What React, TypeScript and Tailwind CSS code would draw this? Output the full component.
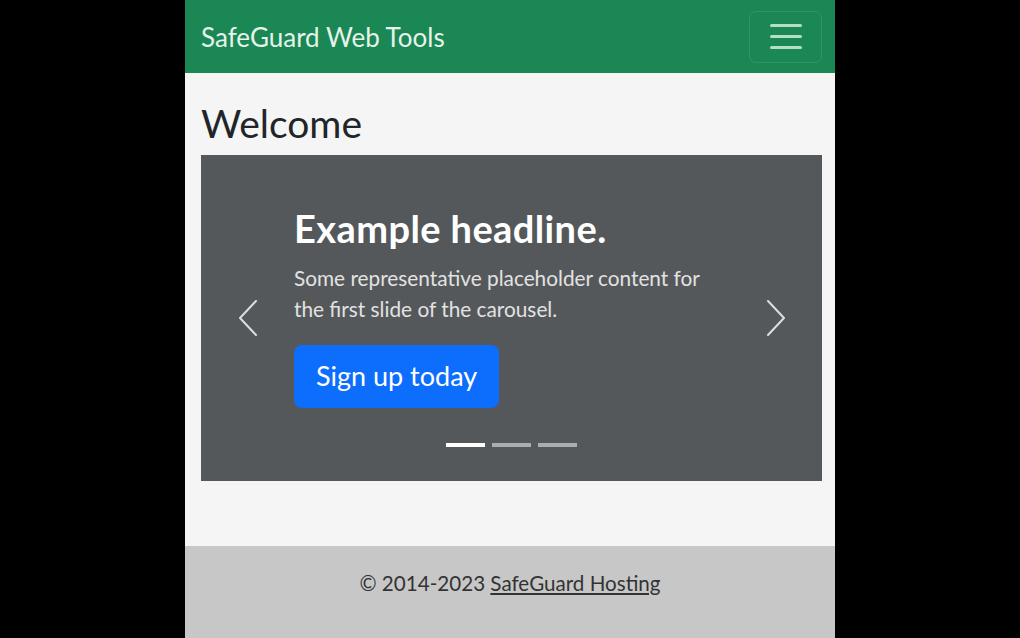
import { useState } from 'react';

const SLIDES = 3;

function Chevron({ dir }: { dir: 'left' | 'right' }) {
  return (
    <svg width="20" height="36" viewBox="0 0 20 36" fill="none" aria-hidden>
      <polyline
        points={dir === 'left' ? '18,1 2,18 18,35' : '2,1 18,18 2,35'}
        stroke="rgba(255,255,255,0.8)"
        strokeWidth="2"
        strokeLinecap="round"
        strokeLinejoin="round"
      />
    </svg>
  );
}

export default function App() {
  const [active, setActive] = useState(0);

  return (
    <div className="flex h-[638px] w-full justify-center overflow-hidden bg-black font-['Lato','Liberation_Sans',sans-serif]">
      <div className="flex h-full w-[650px] flex-col bg-[#f5f5f5]">
        {/* Navbar */}
        <header className="flex h-[73px] shrink-0 items-center justify-between bg-[#1a8754] pl-4 pr-[13px]">
          <span className="pt-[2px] text-[26px] text-[#e6f3eb]">SafeGuard Web Tools</span>
          <button
            type="button"
            aria-label="Menu"
            className="flex h-[52px] w-[73px] flex-col items-center justify-center gap-[8px] rounded-[7px] border border-white/10"
          >
            <span className="h-[3px] w-[32px] rounded-full bg-[#b3e0c5]" />
            <span className="h-[3px] w-[32px] rounded-full bg-[#b3e0c5]" />
            <span className="h-[3px] w-[32px] rounded-full bg-[#b3e0c5]" />
          </button>
        </header>

        {/* Main */}
        <main className="flex-1 pl-4 pr-[13px] pt-[27px]">
          <h1 className="text-[39px] leading-[46px] text-[#212529]">Welcome</h1>

          <div className="mt-[9px] flex bg-[#55585b]">
            <button
              type="button"
              aria-label="Previous"
              className="flex w-[93px] shrink-0 items-center justify-center"
              onClick={() => setActive((active + SLIDES - 1) % SLIDES)}
            >
              <Chevron dir="left" />
            </button>

            <div className="flex flex-1 flex-col pb-[34px] pt-[51px]">
              <h2 className="text-[38px] font-bold leading-[45px] tracking-[0.4px] text-white">
                Example headline.
              </h2>
              <p className="mt-[11px] text-[20.8px] leading-[31px] text-[#e2e2e2]">
                Some representative placeholder content for the first slide of the carousel.
              </p>
              <div className="mt-[21px]">
                <a
                  href="#"
                  className="inline-flex h-[63px] items-center rounded-[8px] bg-[#0d6efd] px-[22px] text-[27px] text-white"
                >
                  Sign up today
                </a>
              </div>
              <div className="mt-[35px] flex justify-center gap-[7px]">
                {Array.from({ length: SLIDES }).map((_, i) => (
                  <button
                    key={i}
                    type="button"
                    aria-label={`Slide ${i + 1}`}
                    onClick={() => setActive(i)}
                    className={[
                      'h-[4px] w-[39px]',
                      i === active ? 'bg-white' : 'bg-white/50',
                    ].join(' ')}
                  />
                ))}
              </div>
            </div>

            <button
              type="button"
              aria-label="Next"
              className="flex w-[93px] shrink-0 items-center justify-center"
              onClick={() => setActive((active + 1) % SLIDES)}
            >
              <Chevron dir="right" />
            </button>
          </div>
        </main>

        {/* Footer */}
        <footer className="h-[92px] shrink-0 bg-[#c7c7c8] pt-[22px] text-center text-[20.6px] text-[#333]">
          © 2014-2023{' '}
          <a href="#" className="underline">
            SafeGuard Hosting
          </a>
        </footer>
      </div>
    </div>
  );
}
